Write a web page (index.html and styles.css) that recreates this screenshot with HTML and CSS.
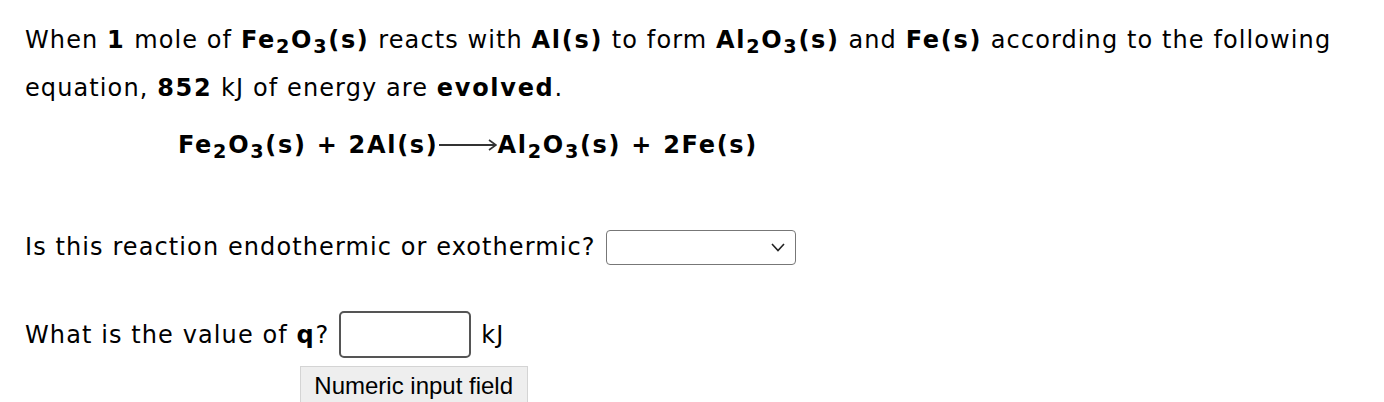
FILE: index.html
```html
<!DOCTYPE html>
<html>
<head>
<meta charset="utf-8">
<link rel="stylesheet" href="styles.css">
</head>
<body>
<div class="page">
  <p class="intro">When <b>1</b> mole of <b>Fe<sub>2</sub>O<sub>3</sub>(s)</b> reacts with <b>Al(s)</b> to form <b>Al<sub>2</sub>O<sub>3</sub>(s)</b> and <b>Fe(s)</b> according to the following equation, <b>852</b> kJ of energy are <b>evolved</b>.</p>
  <div class="equation"><b>Fe<sub>2</sub>O<sub>3</sub>(s) + 2Al(s)</b><svg class="arrow" width="58" height="14" viewBox="0 0 58 14"><line x1="0" y1="7" x2="56" y2="7" stroke="#333" stroke-width="2"/><path d="M50 2 L57 7 L50 12" fill="none" stroke="#333" stroke-width="1.6"/></svg><b>Al<sub>2</sub>O<sub>3</sub>(s) + 2Fe(s)</b></div>
  <div class="question q1">
    <span>Is this reaction endothermic or exothermic?</span>
    <div class="select"><svg width="14" height="9" viewBox="0 0 14 9"><path d="M1 1 L7 7.5 L13 1" fill="none" stroke="#222" stroke-width="1.6"/></svg></div>
  </div>
  <div class="question q2">
    <span>What is the value of <b>q</b>?</span>
    <div class="field-wrap">
      <div class="input"></div>
      <div class="tooltip">Numeric input field</div>
    </div>
    <span class="unit">kJ</span>
  </div>
</div>
</body>
</html>
```

FILE: styles.css
```css
html, body {
  margin: 0;
  padding: 0;
  background: #fff;
}
body {
  font-family: "DejaVu Sans", Verdana, sans-serif;
  font-size: 24px;
  color: #000;
  letter-spacing: 1.1px;
}
.page {
  padding: 16px 0 0 25px;
  overflow: hidden;
  height: 386px;
}
.intro {
  margin: 0;
  line-height: 48px;
  width: 1335px;
}
b {
  font-weight: bold;
  letter-spacing: 1.7px;
}
sub {
  font-size: 0.8em;
  vertical-align: -0.25em;
  line-height: 0;
}
.equation {
  margin-top: 13px;
  padding-left: 153px;
  font-weight: bold;
  display: flex;
  align-items: center;
  height: 40px;
}
.arrow {
  margin: 0 1px 0 0;
}
.question {
  display: flex;
  align-items: center;
}
.q1 {
  margin-top: 64px;
  height: 36px;
}
.select {
  margin-left: 10px;
  border: 1px solid #777;
  border-radius: 4px;
  display: flex;
  align-items: center;
  justify-content: flex-end;
  padding-right: 10px;
  box-sizing: border-box;
  width: 190px;
  height: 35px;
}
.q2 {
  margin-top: 46px;
  height: 47px;
}
.field-wrap {
  position: relative;
  margin-left: 10px;
}
.input {
  width: 132px;
  height: 47px;
  box-sizing: border-box;
  border: 2px solid #555;
  border-radius: 5px;
}
.tooltip {
  position: absolute;
  left: -39px;
  top: 55px;
  width: 228px;
  height: 40px;
  box-sizing: border-box;
  background: #eeeeee;
  border: 1px solid #d4d4d4;
  font-family: "Liberation Sans", Arial, sans-serif;
  font-size: 24px;
  letter-spacing: 0;
  line-height: 38px;
  padding-left: 13px;
  white-space: nowrap;
  color: #000;
}
.unit {
  margin-left: 10px;
}
```
